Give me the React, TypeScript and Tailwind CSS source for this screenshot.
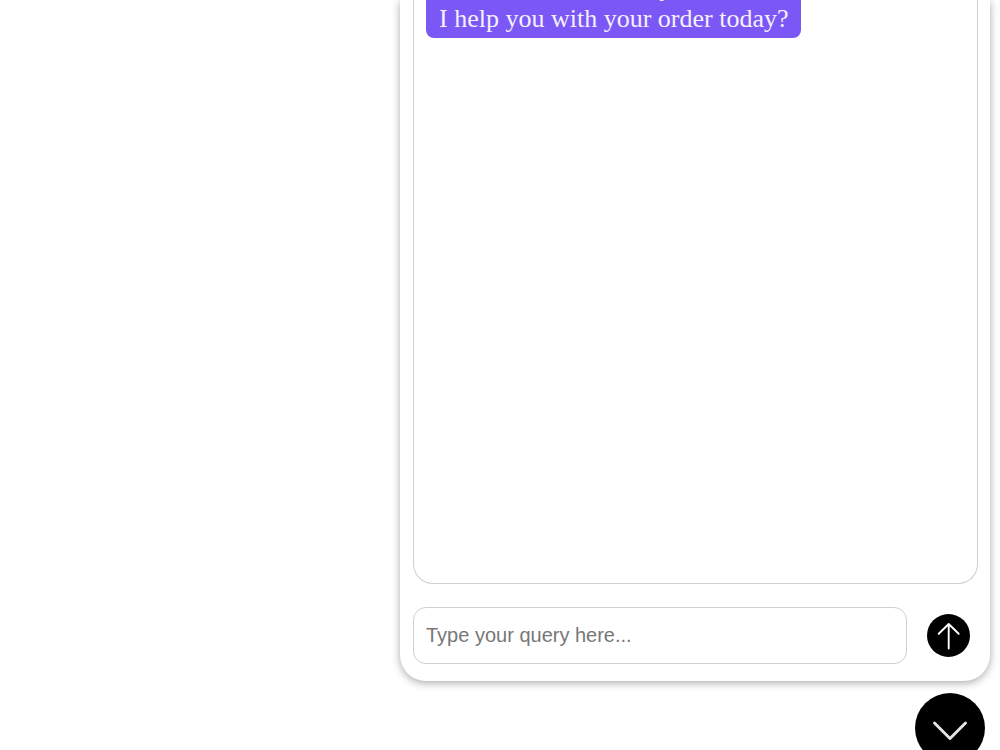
export default function App() {
  return (
    <main className="flex h-screen flex-col items-end overflow-hidden bg-white pr-2.5 font-['Liberation_Sans',sans-serif]">
      <section
        aria-label="Chat"
        className="flex min-h-0 w-full max-w-[590px] flex-1 flex-col rounded-b-[26px] bg-white pr-3 pb-[17px] pl-[13px] shadow-[0_2px_8px_rgba(0,0,0,0.34)]"
      >
        <div className="min-h-0 flex-1 rounded-b-[20px] border border-t-0 border-[#cfcfcf] px-3">
          <div className="flex h-[38px] w-fit flex-col justify-end overflow-hidden rounded-b-lg bg-[#7b58f5] px-[13px] pb-1">
            <p className="shrink-0 font-['Liberation_Serif',serif] text-[26px] leading-[31px] whitespace-nowrap text-[#f5f0ff]">
              Hello there! How may
              <br />I help you with your order today?
            </p>
          </div>
        </div>
        <form
          className="mt-[23px] flex items-center gap-5 pr-2"
          onSubmit={(event) => event.preventDefault()}
        >
          <input
            type="text"
            aria-label="Your query"
            placeholder="Type your query here..."
            className="h-[57px] min-w-0 flex-1 rounded-[13px] border border-[#cfcfcf] bg-white px-3 text-[20px] text-[#333333] outline-none placeholder:text-[#777777]"
          />
          <button
            type="submit"
            aria-label="Send"
            className="flex size-[43px] shrink-0 items-center justify-center rounded-full bg-black"
          >
            <svg
              viewBox="0 0 43 43"
              className="size-full"
              fill="none"
              stroke="white"
              strokeWidth="1.9"
              strokeLinecap="round"
              strokeLinejoin="round"
            >
              <path d="M21.7 34.5V10M11.7 19.8L21.7 10L31.7 19.8" />
            </svg>
          </button>
        </form>
      </section>
      <div className="mt-3 mr-[5px] h-[57px] shrink-0">
        <button
          type="button"
          aria-label="Close chat"
          className="block size-[70px] rounded-full bg-black"
        >
          <svg
            viewBox="0 0 70 70"
            className="size-full"
            fill="none"
            stroke="#e4e4e4"
            strokeWidth="3"
            strokeLinecap="round"
            strokeLinejoin="round"
          >
            <path d="M19.5 30L35 45.5L50.5 30" />
          </svg>
        </button>
      </div>
    </main>
  );
}
